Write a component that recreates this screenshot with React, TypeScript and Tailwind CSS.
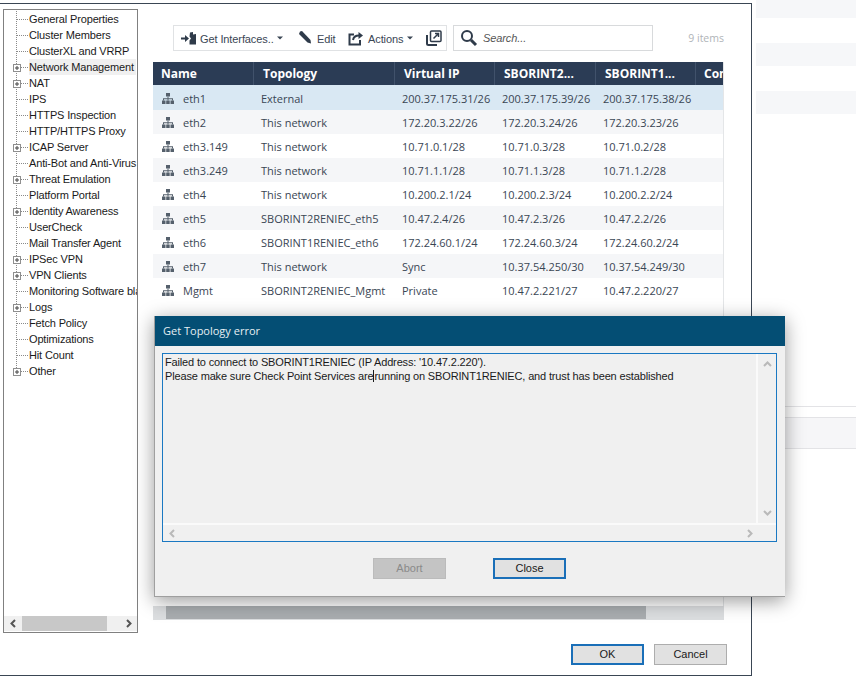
import React from "react";

const treeItems = [
  { label: "General Properties" },
  { label: "Cluster Members" },
  { label: "ClusterXL and VRRP" },
  { label: "Network Management", plus: true, hover: true },
  { label: "NAT", plus: true },
  { label: "IPS" },
  { label: "HTTPS Inspection" },
  { label: "HTTP/HTTPS Proxy" },
  { label: "ICAP Server", plus: true },
  { label: "Anti-Bot and Anti-Virus" },
  { label: "Threat Emulation", plus: true },
  { label: "Platform Portal" },
  { label: "Identity Awareness", plus: true },
  { label: "UserCheck" },
  { label: "Mail Transfer Agent" },
  { label: "IPSec VPN", plus: true },
  { label: "VPN Clients", plus: true },
  { label: "Monitoring Software bla" },
  { label: "Logs", plus: true },
  { label: "Fetch Policy" },
  { label: "Optimizations" },
  { label: "Hit Count" },
  { label: "Other", plus: true, last: true },
];

const rows = [
  ["eth1", "External", "200.37.175.31/26", "200.37.175.39/26", "200.37.175.38/26"],
  ["eth2", "This network", "172.20.3.22/26", "172.20.3.24/26", "172.20.3.23/26"],
  ["eth3.149", "This network", "10.71.0.1/28", "10.71.0.3/28", "10.71.0.2/28"],
  ["eth3.249", "This network", "10.71.1.1/28", "10.71.1.3/28", "10.71.1.2/28"],
  ["eth4", "This network", "10.200.2.1/24", "10.200.2.3/24", "10.200.2.2/24"],
  ["eth5", "SBORINT2RENIEC_eth5", "10.47.2.4/26", "10.47.2.3/26", "10.47.2.2/26"],
  ["eth6", "SBORINT1RENIEC_eth6", "172.24.60.1/24", "172.24.60.3/24", "172.24.60.2/24"],
  ["eth7", "This network", "Sync", "10.37.54.250/30", "10.37.54.249/30"],
  ["Mgmt", "SBORINT2RENIEC_Mgmt", "Private", "10.47.2.221/27", "10.47.2.220/27"],
];

function TreeGutter({ plus, last }: { plus?: boolean; last?: boolean }) {
  return (
    <svg width="25" height="16" className="shrink-0">
      <path d={last ? "M12.5 0V8" : "M12.5 0V16"} stroke="#8a8a8a" strokeDasharray="1 1" fill="none" />
      <path d="M13 8.5H25" stroke="#8a8a8a" strokeDasharray="1 1" fill="none" />
      {plus && (
        <g>
          <rect x="9.5" y="5.5" width="7" height="7" fill="#fff" stroke="#8f8f8f" />
          <path d="M11 9H15M13 7V11" stroke="#444" />
        </g>
      )}
    </svg>
  );
}

function NetIcon() {
  return (
    <svg width="12" height="11" viewBox="0 0 12 11" fill="#55606c" className="shrink-0">
      <rect x="4" y="0" width="4" height="3.5" />
      <rect x="0" y="7.5" width="3.5" height="3.5" />
      <rect x="4.2" y="7.5" width="3.5" height="3.5" />
      <rect x="8.5" y="7.5" width="3.5" height="3.5" />
      <path d="M5.5 3.5H6.5V5.2H11V7.5H10V6.2H6.5V7.5H5.5V6.2H2V7.5H1V5.2H5.5Z" />
    </svg>
  );
}

function Caret() {
  return (
    <svg width="6" height="4" viewBox="0 0 6 4" fill="#3a4654" className="shrink-0">
      <path d="M0 0.5H6L3 3.5Z" />
    </svg>
  );
}

function Chevron({ d, color = "#b9b9b9" }: { d: string; color?: string }) {
  return (
    <svg width="9" height="9" viewBox="0 0 9 9" fill="none" stroke={color} strokeWidth="2" className="shrink-0">
      <path d={d} />
    </svg>
  );
}

export default function App() {
  return (
    <div className="relative w-[856px] h-[682px] overflow-hidden bg-white font-['Liberation_Sans',sans-serif]">
      <div className="flex">
        {/* properties window */}
        <div className="mt-[3px] w-[752px] h-[673px] shrink-0 border-t border-r border-b border-[#3a4654] flex">
          <div className="ml-[3px] mt-[5px] w-[135px] h-[624px] shrink-0 border border-[#808080] flex flex-col">
            <div className="flex-1 overflow-hidden pt-[1px] text-[11px] tracking-[-0.15px] leading-4 text-[#1a1a1a]">
              {treeItems.map((item) => (
                <div key={item.label} className="flex h-4 whitespace-nowrap">
                  <TreeGutter plus={item.plus} last={item.last} />
                  <span className={item.hover ? "bg-[#f0f0f0] pr-[2px]" : ""}>{item.label}</span>
                </div>
              ))}
            </div>
            <div className="h-[15px] mb-[1px] bg-[#f0f0f0] flex items-center">
              <div className="w-[18px] flex justify-center">
                <Chevron d="M6 1L2.5 4.5L6 8" color="#555" />
              </div>
              <div className="w-[85px] h-[15px] bg-[#c8c8c8]" />
              <div className="flex-1" />
              <div className="w-[18px] flex justify-center">
                <Chevron d="M3 1L6.5 4.5L3 8" color="#555" />
              </div>
            </div>
          </div>

          <div className="ml-[15px] w-[571px] shrink-0 flex flex-col">
            <div className="flex pt-[21px] h-[58px] text-[11px] tracking-[-0.1px] text-[#3a4654]">
              <div className="ml-[20px] w-[274px] h-[26px] border border-[#e0e2e4] flex items-center pl-[7px] whitespace-nowrap">
                <svg width="16" height="13" viewBox="0 0 16 13" fill="#2f3b4a" className="mr-[3px] shrink-0">
                  <path d="M0 5.5H4V3L8 6.5L4 10V7.5H0Z" />
                  <path d="M9 0.5L12 0V2.5L15 2V12.5H8.5V8.5L10 6.5L8.5 4.5Z" />
                </svg>
                <span className="w-[72px] mt-[2px]">Get Interfaces..</span>
                <span className="ml-[5px]"><Caret /></span>
                <svg width="14" height="14" viewBox="0 0 14 14" fill="#2f3b4a" className="ml-[15px] shrink-0">
                  <path d="M2 0.5L4 0L12.5 9L13 12.5L9.5 11.5L1 3Z" />
                </svg>
                <span className="ml-[5px] w-[18px] mt-[2px]">Edit</span>
                <svg width="16" height="15" viewBox="0 0 16 15" fill="none" stroke="#2f3b4a" strokeWidth="2" className="ml-[13px] shrink-0">
                  <path d="M6 3.5H1.5V13.5H12V9" />
                  <path d="M5 9C5.5 6 8 4.5 11 4.5" />
                  <path d="M10.5 1L15 4.5L10.5 8Z" fill="#2f3b4a" stroke="none" />
                </svg>
                <span className="ml-[4px] w-[34px] mt-[2px]">Actions</span>
                <span className="ml-[5px]"><Caret /></span>
                <svg width="16" height="16" viewBox="0 0 16 16" fill="none" stroke="#2f3b4a" className="ml-[13px] shrink-0">
                  <rect x="4.5" y="1" width="10.5" height="10.5" rx="1" strokeWidth="1.5" />
                  <path d="M1 5V13.5C1 14.5 1.5 15 2.5 15H11" strokeWidth="2" />
                  <path d="M7.5 8.5L12 4M9 3.5H12.5V7" strokeWidth="1.5" />
                </svg>
              </div>
              <div className="ml-[6px] w-[200px] h-[26px] border border-[#d8dadc] flex items-center pl-[6px]">
                <svg width="18" height="18" viewBox="0 0 18 18" fill="none" stroke="#2f3b4a" className="mr-[5px] shrink-0">
                  <circle cx="7" cy="7" r="5" strokeWidth="2" />
                  <path d="M11 11L16 16" strokeWidth="3" />
                </svg>
                <span className="italic text-[#555]">Search...</span>
              </div>
              <span className="ml-auto mt-[6px] text-[10.5px] tracking-normal text-[#b0b4b8] font-['Open_Sans',sans-serif]">9 items</span>
            </div>

            <div className="w-[571px] overflow-hidden border-r border-[#e4e6e8] font-['Open_Sans',sans-serif] text-[11px] text-[#3a4654]">
              <div className="flex h-[23px] w-[640px] bg-[#2b3c55] text-white font-bold text-[12px] items-center">
                <div className="w-[101px] pl-[8px] border-r border-[#41526b] leading-[23px]">Name</div>
                <div className="w-[141px] pl-[9px] border-r border-[#41526b] leading-[23px]">Topology</div>
                <div className="w-[100px] pl-[9px] border-r border-[#41526b] leading-[23px]">Virtual IP</div>
                <div className="w-[101px] pl-[9px] border-r border-[#41526b] leading-[23px]">SBORINT2...</div>
                <div className="w-[100px] pl-[9px] border-r border-[#41526b] leading-[23px]">SBORINT1...</div>
                <div className="pl-[8px] leading-[23px]">Con</div>
              </div>
              {rows.map((row, i) => (
                <div
                  key={row[0]}
                  className={`flex w-[640px] pt-[3px] items-center whitespace-nowrap ${
                    i === 0 ? "h-[25px] bg-[#d9e8f3]" : i % 2 === 1 ? "h-6 bg-[#f5f6f8]" : "h-6 bg-white"
                  }`}
                >
                  <div className="w-[101px] pl-[9px] flex items-center">
                    <span className="-mt-[2px]"><NetIcon /></span>
                    <span className="ml-[9px]">{row[0]}</span>
                  </div>
                  <div className="w-[141px] pl-[7px]">{row[1]}</div>
                  <div className="w-[100px] pl-[7px]">{row[2]}</div>
                  <div className="w-[101px] pl-[7px]">{row[3]}</div>
                  <div className="w-[100px] pl-[7px]">{row[4]}</div>
                </div>
              ))}
            </div>

            <div className="flex-1 w-[571px] border-r border-[#e4e6e8]" />
            <div className="flex h-[14px] w-[571px] bg-[#dcdee0] mb-[24px]">
              <div className="ml-[13px] w-[480px] h-[13px] bg-[#a9adb0]" />
            </div>
            <div className="h-[21px] mb-[10px] flex justify-end gap-[10px] -mr-[3px] text-[11px] text-[#1a1a1a]">
              <button className="w-[73px] border-2 border-[#1a6fb8] bg-[#e1e1e1]">OK</button>
              <button className="w-[73px] border border-[#adadad] bg-[#e1e1e1]">Cancel</button>
            </div>
          </div>
        </div>

        {/* window behind, on the right */}
        <div className="ml-[4px] flex-1 flex flex-col">
          <div className="h-[18px] bg-[#f6f7f9]" />
          <div className="h-[47px] border-b-[23px] border-[#f6f7f9] mt-[1px]" />
          <div className="h-[48px] border-b-[23px] border-[#f6f7f9]" />
          <div className="mt-[292px] h-[12px] border-t border-b border-[#e3e3e6]" />
          <div className="h-[31px] bg-[#f6f6f8] border-b border-[#e3e3e6]" />
        </div>
      </div>

      {/* error dialog */}
      <div className="absolute left-[154px] top-[316px] w-[631px] h-[281px] bg-[#f0f0f0] border-l border-b border-[#9f9f9f] shadow-[0_4px_18px_rgba(0,0,0,0.4)] flex flex-col">
        <div className="h-[30px] shrink-0 bg-[#044e74] pl-[8px] leading-[30px] text-[11px] text-[#e6eef3] font-['Open_Sans',sans-serif]">
          Get Topology error
        </div>
        <div className="ml-[7px] mt-[7px] w-[615px] h-[189px] shrink-0 border border-[#1a78c2] flex flex-col">
          <div className="flex flex-1 min-h-0">
            <div className="flex-1 border-r-2 border-[#fafafa] pl-[2px] pt-[1px] text-[11px] tracking-[-0.15px] leading-[14px] text-[#1a1a1a]">
              <div>Failed to connect to SBORINT1RENIEC (IP Address: '10.47.2.220').</div>
              <div>
                Please make sure Check Point Services are<span className="border-l border-[#1a1a1a]">running</span> on SBORINT1RENIEC, and trust has been established
              </div>
            </div>
            <div className="w-[18px] flex flex-col items-center justify-between py-[6px]">
              <Chevron d="M1 6L4.5 2.5L8 6" />
              <Chevron d="M1 3L4.5 6.5L8 3" />
            </div>
          </div>
          <div className="h-[18px] shrink-0 border-t-2 border-[#fafafa] flex items-center justify-between pl-[5px] pr-[22px]">
            <Chevron d="M6 1L2.5 4.5L6 8" />
            <Chevron d="M3 1L6.5 4.5L3 8" />
          </div>
        </div>
        <div className="flex mt-[16px] ml-[218px] gap-[47px] text-[11px]">
          <button className="w-[73px] h-[21px] bg-[#c4c4c4] border border-[#bbbbbb] text-[#8a8a8a]">Abort</button>
          <button className="w-[73px] h-[21px] bg-[#e1e1e1] border-2 border-[#1a6fb8] text-[#1a1a1a]">Close</button>
        </div>
      </div>
    </div>
  );
}
